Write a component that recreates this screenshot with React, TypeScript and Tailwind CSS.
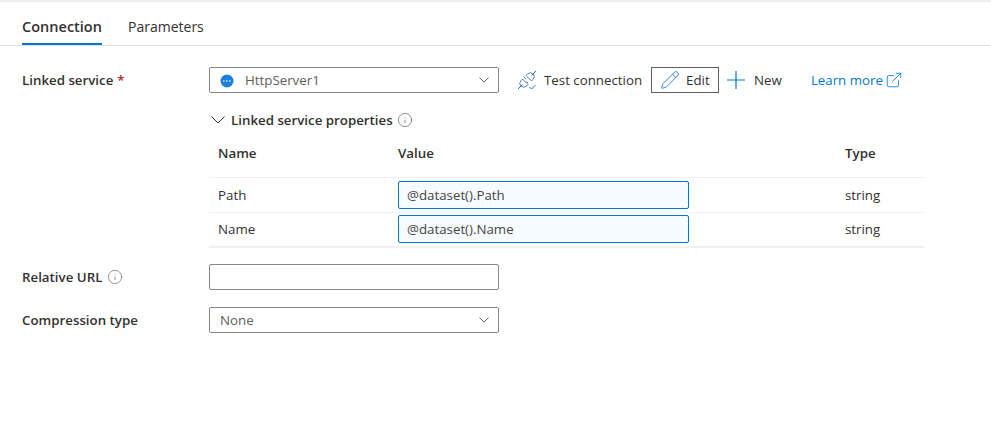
import { ExternalLink, Info, Pencil } from "lucide-react";

const font = "font-['Open_Sans','Noto_Sans',sans-serif]";

function PlugIcon() {
  return (
    <svg width="20" height="20" viewBox="0 0 20 20" fill="none" stroke="#0078d4" strokeWidth="1">
      <path d="M1 19 5.500 14.500M14.500 5.500 19 1" />
      <path d="M5.500 9 11 14.500 9.500 16a3.900 3.900 0 0 1-5.500 0 3.900 3.900 0 0 1 0-5.500Z" stroke="#5c7fa8" />
      <path d="M9 5.500 14.500 11 16 9.500a3.900 3.900 0 0 0 0-5.500 3.900 3.900 0 0 0-5.500 0Z" stroke="#5c7fa8" />
      <path d="M6.500 6.500 9 9M9.500 11.500 11 13" stroke="#5c7fa8" />
      <path d="m12.500 17 2 2 4-4" />
    </svg>
  );
}

function GlobeIcon() {
  return (
    <svg width="14" height="14" viewBox="0 0 14 14">
      <circle cx="7" cy="7" r="6.500" fill="#1a7fd9" />
      <path d="M3 7h1.500M6 7h1.500M9 7h1.500" stroke="#cfe6fa" strokeWidth="1.500" />
    </svg>
  );
}

function Chevron({ w, color }: { w: number; color: string }) {
  return (
    <svg width={w} height={w / 2 + 1} viewBox="0 0 14 8" fill="none" stroke={color} strokeWidth={14 / w}>
      <path d="M.5.500 7 7 13.500.500" />
    </svg>
  );
}

function PlusIcon() {
  return (
    <svg width="18" height="18" viewBox="0 0 18 18" stroke="#0078d4" strokeWidth="1.200">
      <path d="M9 0v18M0 9h18" />
    </svg>
  );
}

function PropRow({ name, value, last }: { name: string; value: string; last?: boolean }) {
  return (
    <div className={`flex h-[35px] items-center pl-[9px] text-[#323130] ${last ? "border-b-2 border-[#f0f0f0]" : "border-b border-[#f0f0f0]"}`}>
      <div className="w-[180px] pt-[2px]">{name}</div>
      <div className="w-[447px]">
        <div className="flex h-[28px] w-[291px] items-center rounded-[2px] border border-[#0078d4] bg-[#f5fbff] px-2 pt-[2px] text-[#484644]">
          {value}
        </div>
      </div>
      <div className="pt-[2px]">string</div>
    </div>
  );
}

export default function App() {
  return (
    <div className={`${font} h-[432px] w-[991px] overflow-hidden bg-white text-[13.3px] text-[#323130]`}>
      <div className="h-[2px] bg-[#eeeeee]" />
      <div className="flex h-[44px] gap-[26px] border-b border-[#e1e1e1] px-[22px] text-[14px]">
        <div className="flex w-[80px] items-center justify-center border-b-2 border-[#0078d4] pt-[8px] text-[14.500px] font-semibold">Connection</div>
        <div className="flex items-center pt-[5px]">Parameters</div>
      </div>

      <div className="mt-[21px] flex pl-[22px]">
        <div className="flex h-[26px] w-[187px] items-center pt-[2px] font-semibold">
          Linked service <span className="ml-1 text-[#a4262c]">*</span>
        </div>
        <div className="w-[715px]">
          <div className="flex items-center">
            <div className="flex h-[26px] w-[290px] items-center justify-between rounded-[2px] border border-[#8a8886] pl-[10px] pr-[9px]">
              <div className="flex items-center gap-[11px] pt-[2px] text-[#605e5c]">
                <GlobeIcon />
                HttpServer1
              </div>
              <Chevron w={10} color="#605e5c" />
            </div>
            <div className="ml-[18px] flex items-center gap-[7px]">
              <PlugIcon />
              <span className="pt-[2px]">Test connection</span>
            </div>
            <div className="ml-[9px] flex h-[26px] w-[68px] items-center gap-[6px] border border-[#605e5c] pl-[8px]">
              <Pencil size={20} strokeWidth={1.100} className="text-[#2b7cd3]" />
              <span className="pt-[2px]">Edit</span>
            </div>
            <div className="ml-[8px] flex items-center gap-[9px]">
              <PlusIcon />
              <span className="pt-[2px]">New</span>
            </div>
            <div className="ml-[29px] flex items-center gap-[2px] text-[#0078d4]">
              <span className="pt-[2px]">Learn more</span>
              <ExternalLink size={18} strokeWidth={1.100} />
            </div>
          </div>

          <div className="mt-[16px] flex items-center pl-[2px] font-semibold">
            <Chevron w={14} color="#323130" />
            <span className="ml-[6px] pt-[2px]">Linked service properties</span>
            <Info size={16} strokeWidth={1} className="ml-[4px] text-[#605e5c]" />
          </div>

          <div className="mt-[5px] w-[715px]">
            <div className="flex h-[41px] items-start pl-[9px] pt-[8px] font-semibold">
              <div className="w-[180px]">Name</div>
              <div className="w-[447px]">Value</div>
              <div>Type</div>
            </div>
            <div className="border-t border-[#f0f0f0]">
              <PropRow name="Path" value="@dataset().Path" />
              <PropRow name="Name" value="@dataset().Name" last />
            </div>
          </div>
        </div>
      </div>

      <div className="mt-[16px] flex items-center pl-[22px]">
        <div className="flex w-[187px] items-center gap-[5px] pt-[2px] font-semibold">
          Relative URL
          <Info size={16} strokeWidth={1} className="-mt-[2px] text-[#605e5c]" />
        </div>
        <div className="h-[26px] w-[290px] rounded-[2px] border border-[#8a8886]" />
      </div>

      <div className="mt-[17px] flex items-center pl-[22px]">
        <div className="w-[187px] pt-[2px] font-semibold">Compression type</div>
        <div className="flex h-[26px] w-[290px] items-center justify-between rounded-[2px] border border-[#8a8886] pl-[10px] pr-[9px] text-[#605e5c]">
          <span className="pt-[2px]">None</span>
          <Chevron w={10} color="#605e5c" />
        </div>
      </div>
    </div>
  );
}
